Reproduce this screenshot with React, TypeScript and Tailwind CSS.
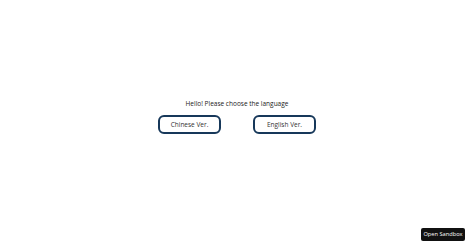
import React from "react";

export default function App() {
  return (
    <div className="relative w-[474px] h-[248px] bg-white" style={{ fontFamily: '"Open Sans", "Noto Sans", sans-serif' }}>
      <div className="flex flex-col items-center pt-[99px]">
        <p className="text-[6.5px] leading-[10px] text-[#1a1a1a]">Hello! Please choose the language</p>
        <div className="mt-[6px] flex gap-[32px]">
          <button className="w-[63px] h-[19px] rounded-[6px] border-2 border-[#17385a] text-[6.5px] text-[#333] flex items-center justify-center">
            Chinese Ver.
          </button>
          <button className="w-[63px] h-[19px] rounded-[6px] border-2 border-[#17385a] text-[6.5px] text-[#333] flex items-center justify-center">
            English Ver.
          </button>
        </div>
      </div>
      <div className="absolute right-[9px] bottom-[7px] w-[44px] h-[13px] rounded-[2px] bg-[#111] text-white text-[5.7px] flex items-center justify-center">
        Open Sandbox
      </div>
    </div>
  );
}
